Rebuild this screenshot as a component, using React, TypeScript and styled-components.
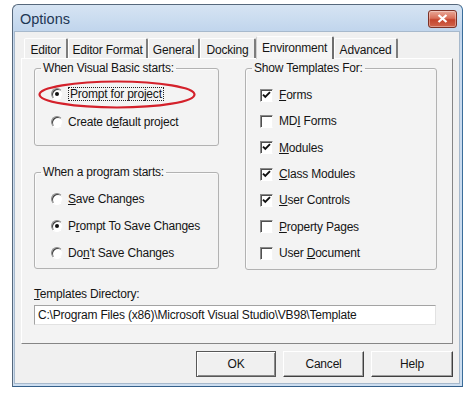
import styled, { createGlobalStyle } from "styled-components";

const GlobalStyle = createGlobalStyle`
  body {
    margin: 0;
    background: #fff;
  }
`;

const Page = styled.div`
  position: relative;
  padding: 4px 0 0 12px;
  font-family: "Liberation Sans", Arial, sans-serif;
  font-size: 12px;
  letter-spacing: -0.2px;
  color: #151515;
`;

const Window = styled.div`
  width: 451px;
  height: 383px;
  box-sizing: border-box;
  border: 1px solid #56687c;
  border-right-color: #3a6d9a;
  border-bottom-color: #345f8a;
  border-radius: 6px 6px 0 0;
  background: linear-gradient(#d6e4f3, #bfd4ec 28px, #c8daef 40px, #cddef0);
  display: flex;
  flex-direction: column;
`;

const TitleBar = styled.div`
  height: 27px;
  flex: none;
  display: flex;
  align-items: center;
  justify-content: space-between;
  padding: 0 5px 0 7px;
`;

const Title = styled.span`
  font-size: 14.5px;
  letter-spacing: 0;
  color: #1e3654;
`;

const CloseButton = styled.div`
  width: 29px;
  height: 18px;
  box-sizing: border-box;
  border: 1px solid #7c3126;
  border-radius: 3px;
  background: linear-gradient(#e9a898, #d9705a 45%, #c4432c 55%, #d0644c);
  box-shadow: inset 0 0 0 1px rgba(255, 255, 255, 0.35);
  display: flex;
  align-items: center;
  justify-content: center;
`;

const Client = styled.div`
  flex: 1;
  margin: 0 3px 3px 2px;
  padding: 4px 6px 0 6px;
  background: #f0f0f0;
  box-shadow: 0 0 0 1px #a7b9cc;
  display: flex;
  flex-direction: column;
`;

const TabStrip = styled.div`
  height: 22px;
  padding-left: 3px;
  display: flex;
  align-items: flex-end;
  position: relative;
  z-index: 1;
`;

const Tab = styled.div<{ $w: number; $active?: boolean }>`
  width: ${(p) => p.$w}px;
  height: ${(p) => (p.$active ? 23 : 20)}px;
  margin-bottom: ${(p) => (p.$active ? -1 : 0)}px;
  box-sizing: border-box;
  padding-top: ${(p) => (p.$active ? 0 : 2)}px;
  display: flex;
  align-items: center;
  justify-content: center;
  background: ${(p) => (p.$active ? "#f5f5f5" : "#f0f0f0")};
  border-top: 1px solid #fdfdfd;
  border-left: 1px solid ${(p) => (p.$active ? "#d0d0d0" : "#ffffff")};
  border-right: 2px solid ${(p) => (p.$active ? "#6e6e6e" : "#7d7d7d")};
  border-radius: 2px 2px 0 0;
`;

const Panel = styled.div`
  height: 286px;
  box-sizing: border-box;
  border: 1px solid;
  border-color: #ffffff #858585 #858585 #ffffff;
  background: #f3f3f3;
  padding: 2px 14px 0 12px;
  display: flex;
  flex-direction: column;
`;

const Columns = styled.div`
  display: grid;
  grid-template-columns: 185px 192px;
  column-gap: 26px;
  align-items: start;
`;

const Column = styled.div`
  display: flex;
  flex-direction: column;
  gap: 19px;
`;

const Group = styled.fieldset<{ $pt: number; $pb: number }>`
  margin: 0;
  min-width: 0;
  padding: ${(p) => p.$pt}px 0 ${(p) => p.$pb}px 0;
  border: 1px solid #b2b2b2;
  border-radius: 3px;
  box-shadow: inset 1px 1px 0 #fbfbfb;
`;

const Legend = styled.legend`
  margin-left: 6px;
  padding: 0 2px;
  line-height: 14px;
`;

const OptionRow = styled.div<{ $h: number; $gap: number; $indent: number }>`
  height: ${(p) => p.$h}px;
  padding-left: ${(p) => p.$indent}px;
  display: flex;
  align-items: center;
  gap: ${(p) => p.$gap}px;
`;

const Radio = styled.span<{ $on?: boolean }>`
  position: relative;
  flex: none;
  width: 12px;
  height: 12px;
  box-sizing: border-box;
  border-radius: 50%;
  border: 1px solid;
  border-color: #8a8a8a #f4f4f4 #ffffff #8a8a8a;
  box-shadow: inset 1px 1px 0 #404040;
  background: #fff;

  &::after {
    content: "";
    display: ${(p) => (p.$on ? "block" : "none")};
    position: absolute;
    left: 3px;
    top: 3px;
    width: 4px;
    height: 4px;
    border-radius: 50%;
    background: #111;
  }
`;

const CheckBox = styled.span`
  flex: none;
  width: 13px;
  height: 13px;
  box-sizing: border-box;
  border: 1px solid;
  border-color: #8a8a8a #f4f4f4 #ffffff #8a8a8a;
  box-shadow: inset 1px 1px 0 #505050;
  background: #fff;
  display: flex;
`;

const Focus = styled.span`
  border: 1px dotted #222;
  padding: 0 1px;
  line-height: 12px;
`;

const Key = styled.span`
  text-decoration: underline;
  text-underline-offset: 1px;
`;

const FieldLabel = styled.div`
  margin-top: 17px;
  line-height: 14px;
`;

const EditBox = styled.div`
  margin-top: 4px;
  width: 402px;
  height: 20px;
  box-sizing: border-box;
  border: 1px solid;
  border-color: #a3a3a3 #e2e2e2 #e2e2e2 #a3a3a3;
  background: #fff;
  padding-left: 3px;
  display: flex;
  align-items: center;
  white-space: nowrap;
`;

const ButtonRow = styled.div`
  margin-top: 7px;
  display: flex;
  justify-content: flex-end;
  gap: 7px;
`;

const Button = styled.div<{ $w: number; $default?: boolean }>`
  width: ${(p) => p.$w}px;
  height: 26px;
  box-sizing: border-box;
  border: 1px solid;
  border-color: ${(p) =>
    p.$default ? "#585858" : "#ffffff #404040 #404040 #ffffff"};
  box-shadow: ${(p) =>
    p.$default
      ? "inset 1px 1px 0 #fff, inset -1px -1px 0 #8a8a8a"
      : "inset -1px -1px 0 #a0a0a0"};
  background: #f0f0f0;
  display: flex;
  align-items: center;
  justify-content: center;
`;

const Ring = styled.svg`
  position: absolute;
  left: 38px;
  top: 80px;
  width: 158px;
  height: 29px;
  overflow: visible;
`;

const Check = () => (
  <svg width="11" height="11" viewBox="0 0 11 11">
    <path d="M2 4.6 L4.3 7 L9 2.2" fill="none" stroke="#111" strokeWidth="1.9" />
  </svg>
);

const tabs = [
  { label: "Editor", w: 44 },
  { label: "Editor Format", w: 80 },
  { label: "General", w: 52 },
  { label: "Docking", w: 56 },
  { label: "Environment", w: 78, active: true },
  { label: "Advanced", w: 64 },
];

const templates: { pre: string; key: string; post: string; on: boolean }[] = [
  { pre: "", key: "F", post: "orms", on: true },
  { pre: "MD", key: "I", post: " Forms", on: false },
  { pre: "", key: "M", post: "odules", on: true },
  { pre: "", key: "C", post: "lass Modules", on: true },
  { pre: "", key: "U", post: "ser Controls", on: true },
  { pre: "", key: "P", post: "roperty Pages", on: false },
  { pre: "User ", key: "D", post: "ocument", on: false },
];

const programStarts = [
  { pre: "", key: "S", post: "ave Changes", on: false },
  { pre: "P", key: "r", post: "ompt To Save Changes", on: true },
  { pre: "Do", key: "n", post: "'t Save Changes", on: false },
];

export default function App() {
  return (
    <Page>
      <GlobalStyle />
      <Window>
        <TitleBar>
          <Title>Options</Title>
          <CloseButton>
            <svg width="11" height="9" viewBox="0 0 11 9">
              <path d="M1.5 1 L9.5 8 M9.5 1 L1.5 8" stroke="#fff" strokeWidth="2.3" />
            </svg>
          </CloseButton>
        </TitleBar>
        <Client>
          <TabStrip>
            {tabs.map((t) => (
              <Tab key={t.label} $w={t.w} $active={t.active}>
                {t.label}
              </Tab>
            ))}
          </TabStrip>
          <Panel>
            <Columns>
              <Column>
                <Group $pt={5} $pb={9}>
                  <Legend>When Visual Basic starts:</Legend>
                  <OptionRow $h={28} $gap={5} $indent={16}>
                    <Radio $on />
                    <Focus>Prompt for project</Focus>
                  </OptionRow>
                  <OptionRow $h={28} $gap={5} $indent={16}>
                    <Radio />
                    <span>
                      Create d<Key>e</Key>fault project
                    </span>
                  </OptionRow>
                </Group>
                <Group $pt={6} $pb={2}>
                  <Legend>When a program starts:</Legend>
                  {programStarts.map((o) => (
                    <OptionRow key={o.post} $h={27} $gap={5} $indent={16}>
                      <Radio $on={o.on} />
                      <span>
                        {o.pre}
                        <Key>{o.key}</Key>
                        {o.post}
                      </span>
                    </OptionRow>
                  ))}
                </Group>
              </Column>
              <Group $pt={7} $pb={3}>
                <Legend>Show Templates For:</Legend>
                {templates.map((t) => (
                  <OptionRow key={t.post} $h={26.33} $gap={6} $indent={14}>
                    <CheckBox>{t.on && <Check />}</CheckBox>
                    <span>
                      {t.pre}
                      <Key>{t.key}</Key>
                      {t.post}
                    </span>
                  </OptionRow>
                ))}
              </Group>
            </Columns>
            <FieldLabel>
              <Key>T</Key>emplates Directory:
            </FieldLabel>
            <EditBox>C:\Program Files (x86)\Microsoft Visual Studio\VB98\Template</EditBox>
          </Panel>
          <ButtonRow>
            <Button $w={80} $default>
              OK
            </Button>
            <Button $w={81}>Cancel</Button>
            <Button $w={82}>Help</Button>
          </ButtonRow>
        </Client>
      </Window>
      <Ring viewBox="0 0 158 29">
        <ellipse cx="79" cy="14.5" rx="77.5" ry="13" fill="none" stroke="#d4212b" strokeWidth="2.2" />
      </Ring>
    </Page>
  );
}
